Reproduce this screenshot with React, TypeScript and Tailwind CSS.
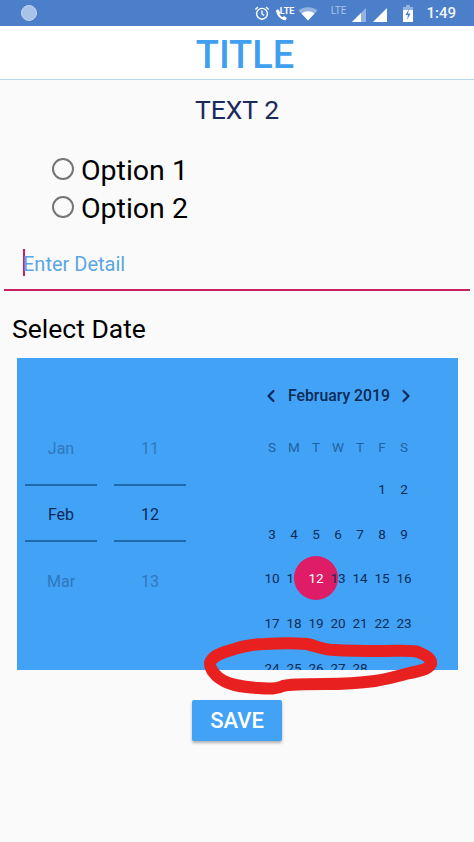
import { ChevronLeft, ChevronRight } from "lucide-react";

const weekDays = ["S", "M", "T", "W", "T", "F", "S"];
const days: (number | null)[] = [
  null, null, null, null, null, 1, 2,
  3, 4, 5, 6, 7, 8, 9,
  10, 11, 12, 13, 14, 15, 16,
  17, 18, 19, 20, 21, 22, 23,
  24, 25, 26, 27, 28, null, null,
];

function StatusBar() {
  return (
    <div className="h-[26px] bg-[#4b7fca] flex items-center text-white">
      <div className="ml-[21px] w-[16px] h-[16px] rounded-full bg-[#a9c3e8] border border-[#c4d6ef]" />
      <div className="ml-auto flex items-center">
        <svg width="16" height="16" viewBox="0 0 16 16" fill="none" stroke="white" strokeWidth="1.4">
          <circle cx="8" cy="8.8" r="5.4" />
          <path d="M8 5.6V9l2.2 1.3M1.4 4.4 4 2M14.6 4.4 12 2" />
        </svg>
        <div className="relative ml-[4px] w-[22px] h-[18px]">
          <svg width="15" height="15" viewBox="0 0 24 24" fill="white" className="absolute left-0 top-[3px]">
            <path d="M6.6 3.5 3.5 5c-.6 6.8 6.7 15.5 15 16l2-3.5-4.5-3-2 2c-2-.8-4.5-3.5-5.2-5.5l2-1.8z" />
          </svg>
          <span className="absolute left-[6px] top-0 text-[9px] leading-[14px] font-bold font-['Roboto',sans-serif]">LTE</span>
        </div>
        <svg width="20" height="15" viewBox="0 0 20 15" className="ml-[2px]">
          <path d="M0.5 4.5C5.5 0 14.5 0 19.5 4.5L10 14.5z" fill="white" opacity="0.4" />
          <path d="M3.5 7.5C7 4.5 13 4.5 16.5 7.5L10 14.5z" fill="white" />
        </svg>
        <span className="ml-[13px] -mt-[5px] text-[10px] leading-[14px] font-['Roboto',sans-serif] text-[#a9c3e8]">LTE</span>
        <svg width="14" height="14" viewBox="0 0 14 14" className="ml-[6px] mt-[3px]">
          <path d="M14 0V14H0z" fill="white" opacity="0.4" />
          <path d="M9 5V14H0z" fill="white" />
        </svg>
        <svg width="14" height="14" viewBox="0 0 14 14" fill="white" className="ml-[7px] mt-[3px]">
          <path d="M14 0V14H0z" />
        </svg>
        <svg width="10" height="17" viewBox="0 0 10 17" className="ml-[16px]">
          <path d="M3 0h4v2H3z" fill="white" opacity="0.4" />
          <path d="M0 2h10v3H0z" fill="white" opacity="0.4" />
          <path d="M0 5h10v12H0z" fill="white" />
          <path d="M6 4 2.5 10H5l-1 5 3.5-6.5H5z" fill="#4b7fca" />
        </svg>
        <span className="ml-[13px] mr-[18px] text-[15px] font-medium font-['Roboto',sans-serif] text-[#f1f5fb]">1:49</span>
      </div>
    </div>
  );
}

function Spinner({ items }: { items: string[] }) {
  return (
    <div className="w-[72px] flex flex-col items-center text-[16px]">
      <div className="h-[70px] flex items-center text-[#2f78bd]">{items[0]}</div>
      <div className="w-full h-[58px] pt-[3px] border-y-2 border-[#1f69ac] flex items-center justify-center text-[#0b2a55]">
        {items[1]}
      </div>
      <div className="h-[80px] flex items-center text-[#2f78bd]">{items[2]}</div>
    </div>
  );
}

function Calendar() {
  return (
    <div className="w-[155px] text-[13.5px] text-[#0d2c58]">
      <div className="h-[20px] flex items-center justify-between text-[#0b2a55]">
        <ChevronLeft size={20} strokeWidth={2.6} />
        <span className="pl-[1px] text-[15.8px] font-medium">February 2019</span>
        <ChevronRight size={20} strokeWidth={2.6} />
      </div>
      <div className="grid grid-cols-7 w-[154px] mt-[31px] h-[20px] items-center text-center text-[#1f63a3]">
        {weekDays.map((d, i) => (
          <span key={i}>{d}</span>
        ))}
      </div>
      <div className="grid grid-cols-7 w-[154px] auto-rows-[44.6px] mt-[10px] text-center">
        {days.map((d, i) => (
          <div key={i} className="relative flex items-center justify-center">
            {d === 12 ? (
              <>
                <span className="absolute left-1/2 top-1/2 w-[44px] h-[44px] -ml-[22px] -mt-[22px] rounded-full bg-[#de1d66]" />
                <span className="relative text-white">12</span>
              </>
            ) : (
              d
            )}
          </div>
        ))}
      </div>
    </div>
  );
}

export default function App() {
  return (
    <div className="relative w-[474px] h-[842px] overflow-hidden bg-[#fafafa] font-['Roboto',sans-serif]">
      <StatusBar />
      <div className="h-[54px] pt-[6px] bg-white border-b border-[#b4d8e8] flex items-center justify-center pl-[16px] text-[38px] font-medium text-[#409fee]">
        TITLE
      </div>
      <div className="mt-[14px] h-[32px] flex items-center justify-center text-[26.5px] text-[#1b2a5c]">TEXT 2</div>
      <div className="mt-[29px] ml-[52px] flex flex-col gap-[5px] text-[28.5px] text-black">
        {["Option 1", "Option 2"].map((label) => (
          <div key={label} className="h-[33px] flex items-center gap-[7px]">
            <span className="w-[22px] h-[22px] rounded-full border-2 border-[#757575] -mt-[5px]" />
            {label}
          </div>
        ))}
      </div>
      <div className="mt-[23px] mx-[4px] h-[42px] border-b-2 border-[#c9215f] pl-[19px]">
        <div className="h-[27px] border-l-2 border-[#c9215f] flex items-center text-[20px] text-[#5aa6e3]">
          <span className="-ml-[2px] mt-[2px]">Enter Detail</span>
        </div>
      </div>
      <div className="mt-[23px] ml-[12px] h-[30px] flex items-center text-[26.5px] text-black">Select Date</div>
      <div className="mt-[14px] ml-[17px] w-[441px] h-[312px] overflow-hidden bg-[#42a2f5] flex pl-[8px]">
        <div className="mt-[56px] flex gap-[17px]">
          <Spinner items={["Jan", "Feb", "Mar"]} />
          <Spinner items={["11", "12", "13"]} />
        </div>
        <div className="ml-[75px] mt-[28px]">
          <Calendar />
        </div>
      </div>
      <button className="block mt-[30px] ml-[192px] w-[90px] h-[41px] rounded-[2px] bg-[#42a2f5] text-white text-[22px] font-medium shadow-[0_2px_3px_rgba(0,0,0,0.3)]">
        SAVE
      </button>
      <svg className="absolute left-0 top-0 pointer-events-none" width="474" height="842" fill="none">
        <path
          d="M210 663C212 657 218 654 228 651C240 647 250 644 265 644C280 643 295 643 307 644C317 646 322 650 335 650C350 651 365 651 385 651C400 651 412 650 418 652C426 655 432 659 431 664C429 669 420 671 410 673C398 676 388 679 375 681C360 683 345 684 325 684C305 684 290 684 283 686C277 689 270 689 258 688C245 687 233 686 224 681C216 677 210 670 210 663Z"
          stroke="#e8201f"
          strokeWidth="12"
          strokeLinejoin="round"
        />
      </svg>
    </div>
  );
}
